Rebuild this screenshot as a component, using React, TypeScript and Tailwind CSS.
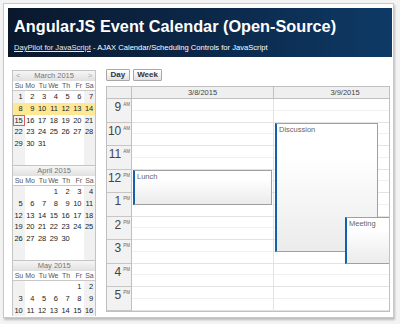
import React from "react";

const DOW = ["Su", "Mo", "Tu", "We", "Th", "Fr", "Sa"];

function NavMonth({
  title,
  first,
  count,
  arrows,
  selRow,
  today,
  rows = 6,
}: {
  title: string;
  first: number;
  count: number;
  arrows?: boolean;
  selRow?: number;
  today?: number;
  rows?: number;
}) {
  const cells: (number | null)[] = [];
  for (let i = 0; i < rows * 7; i++) {
    const d = i - first + 1;
    cells.push(d >= 1 && d <= count ? d : null);
  }
  return (
    <div>
      <div className="h-[11px] flex items-center justify-between px-[3px] bg-gradient-to-b from-[#f6f6f6] to-[#e0e0e0] border-t border-[#c4c4c4] text-[7.5px] leading-none text-[#777]">
        <span className="w-[6px] text-[#a8a8a8]">{arrows ? "<" : ""}</span>
        <span>{title}</span>
        <span className="w-[6px] text-right text-[#a8a8a8]">{arrows ? ">" : ""}</span>
      </div>
      <div className="grid grid-cols-7 h-[10px] border-b border-[#c8c8c8] bg-white text-[7px] leading-none text-[#555]">
        {DOW.map((d) => (
          <div key={d} className="flex items-center justify-end pr-[1.5px]">
            {d}
          </div>
        ))}
      </div>
      <div className="grid grid-cols-7">
        {cells.map((d, i) => {
          const row = Math.floor(i / 7);
          const col = i % 7;
          const weekend = col === 0 || col === 6;
          const sel = row === selRow;
          const isToday = d !== null && d === today;
          const bg = sel ? "bg-[#ffe794]" : weekend ? "bg-[#f1f1f1]" : "bg-white";
          return (
            <div
              key={i}
              className={`h-[11.75px] flex items-center justify-end pr-[2px] text-[7.5px] leading-none text-[#222] ${bg} ${
                isToday ? "shadow-[inset_0_0_0_1px_#e25b5b]" : ""
              }`}
            >
              {d ?? ""}
            </div>
          );
        })}
        {rows === 6 &&
          DOW.map((d, col) => (
            <div
              key={"s" + d}
              className={`h-[3.5px] ${col === 0 || col === 6 ? "bg-[#f1f1f1]" : "bg-white"}`}
            />
          ))}
      </div>
    </div>
  );
}

const HOURS: [string, string][] = [
  ["9", "AM"],
  ["10", "AM"],
  ["11", "AM"],
  ["12", "PM"],
  ["1", "PM"],
  ["2", "PM"],
  ["3", "PM"],
  ["4", "PM"],
  ["5", "PM"],
];

function DayCells() {
  return (
    <>
      {HOURS.map(([h]) => (
        <div key={h}>
          <div className="h-[11.75px] border-b border-[#f0f0f0]" />
          <div className="h-[11.75px] border-b border-[#e3e3e3]" />
        </div>
      ))}
    </>
  );
}

function Event({
  text,
  top,
  left,
  width,
  height,
}: {
  text: string;
  top: number;
  left: number;
  width: number;
  height: number;
}) {
  return (
    <div
      className="absolute border border-[#a0a0a0] border-l-2 border-l-[#1461ab] bg-gradient-to-b from-white from-25% to-[#ebebeb] overflow-hidden"
      style={{ top, left, width, height }}
    >
      <div className="pl-[2px] pt-[2.5px] text-[7.5px] leading-none text-[#666]">{text}</div>
    </div>
  );
}

export default function App() {
  return (
    <div className="w-[400px] h-[324px] overflow-hidden bg-[#f3f3f3] pt-[3px] pl-[3px] font-['Liberation_Sans',Arial,sans-serif]">
      <div className="w-[391px] h-[315px] bg-white border border-[#c9c9c9] shadow-[1px_2px_2px_rgba(0,0,0,0.22)] overflow-hidden pt-[4px] pl-[4px]">
        <div className="w-[384px] h-[49px] bg-gradient-to-r from-[#0a182c] via-[#0b2748] to-[#0e3a66] pl-[6px] pt-[8px]">
          <div className="text-[16.3px] leading-[20px] font-bold text-white whitespace-nowrap">
            AngularJS Event Calendar (Open-Source)
          </div>
          <div className="mt-[7px] text-[7.6px] leading-[10px] text-white whitespace-nowrap">
            <span className="underline text-[#e4e8f4]">DayPilot for JavaScript</span>
            {" - AJAX Calendar/Scheduling Controls for JavaScript"}
          </div>
        </div>

        <div className="flex items-start mt-[12px]">
          <div className="ml-[4px] mt-[1px] w-[84.25px] shrink-0 border-l border-r border-[#c4c4c4]">
            <NavMonth title="March 2015" first={0} count={31} arrows selRow={1} today={15} />
            <NavMonth title="April 2015" first={3} count={30} />
            <NavMonth title="May 2015" first={5} count={31} rows={3} />
          </div>

          <div className="ml-[9.75px] shrink-0">
            <div className="flex gap-[3px]">
              <div className="h-[12px] px-[3.5px] flex items-center border border-[#a8a8a8] rounded-[1px] bg-gradient-to-b from-white to-[#e2e2e2] text-[8px] font-bold leading-none text-[#333]">
                Day
              </div>
              <div className="h-[12px] px-[3.5px] flex items-center border border-[#a8a8a8] rounded-[1px] bg-gradient-to-b from-white to-[#e2e2e2] text-[8px] font-bold leading-none text-[#333]">
                Week
              </div>
            </div>

            <div className="mt-[5px] w-[284px] border border-[#c0c0c0] overflow-hidden">
              <div className="flex h-[12px] border-b border-[#c0c0c0] bg-[#efefef]">
                <div className="w-[25px] shrink-0 border-r border-[#c0c0c0]" />
                <div className="w-[142px] shrink-0 border-r border-[#c0c0c0] flex items-center justify-center text-[7.5px] leading-none text-[#444]">
                  3/8/2015
                </div>
                <div className="w-[142px] shrink-0 flex items-center justify-center text-[7.5px] leading-none text-[#444]">
                  3/9/2015
                </div>
              </div>
              <div className="flex">
                <div className="w-[25px] shrink-0 border-r border-[#c0c0c0] bg-[#f2f2f2]">
                  {HOURS.map(([h, ap]) => (
                    <div
                      key={h}
                      className="h-[23.5px] border-b border-[#c6c6c6] flex justify-end items-start pr-[1px] pt-[2px]"
                    >
                      <span className="text-[12px] leading-[13px] text-[#444]">{h}</span>
                      <span className="ml-[2px] mt-[2px] text-[4.5px] leading-none text-[#666]">{ap}</span>
                    </div>
                  ))}
                </div>
                <div className="relative w-[142px] shrink-0 border-r border-[#e3e3e3]">
                  <DayCells />
                  <Event text="Lunch" top={70.5} left={1} width={139} height={35.25} />
                </div>
                <div className="relative w-[142px] shrink-0">
                  <DayCells />
                  <Event text="Discussion" top={23.5} left={1} width={103} height={129.25} />
                  <Event text="Meeting" top={117.5} left={71} width={70} height={47} />
                </div>
              </div>
            </div>
          </div>
        </div>
      </div>
    </div>
  );
}
